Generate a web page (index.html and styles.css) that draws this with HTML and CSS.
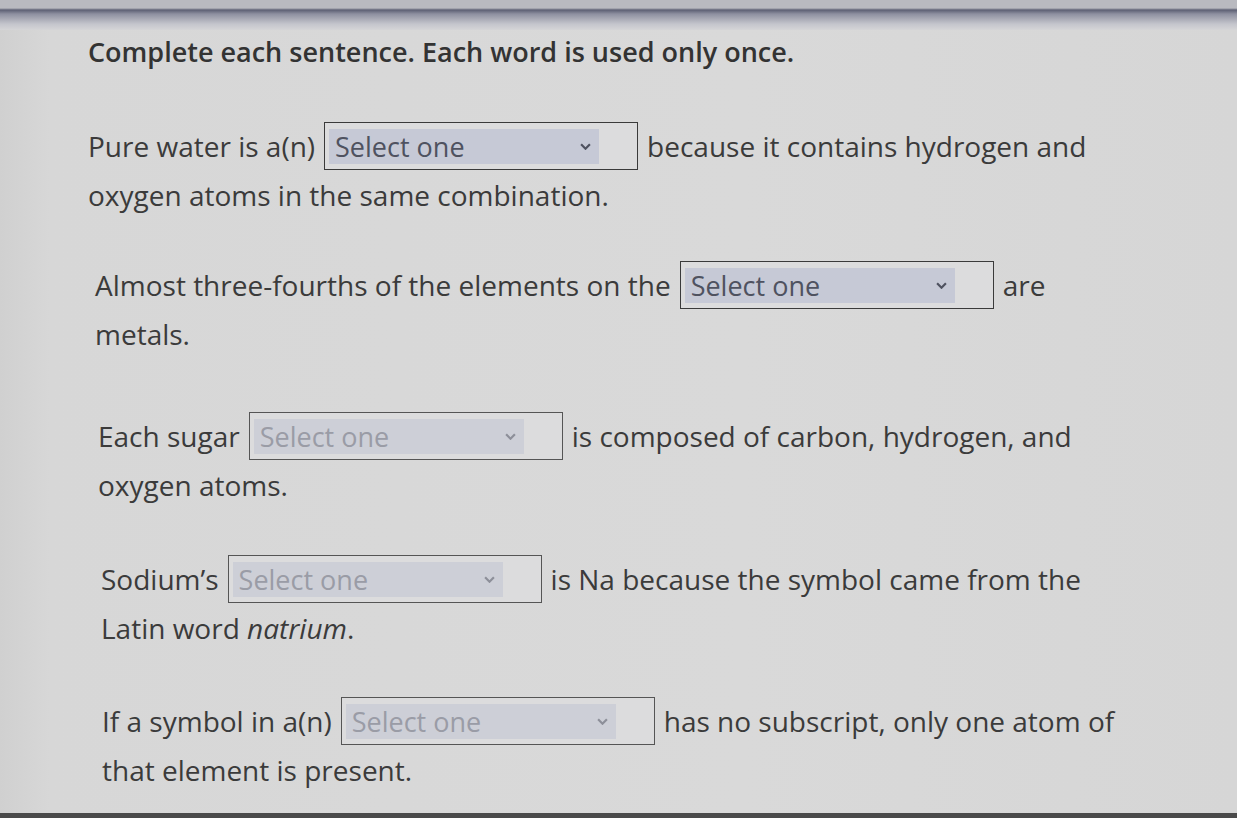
FILE: index.html
```html
<!DOCTYPE html>
<html lang="en">
<head>
    <meta charset="UTF-8">
    <title>Complete each sentence</title>
    <link rel="stylesheet" href="styles.css">
</head>
<body>

    <div class="screen-edge"></div>

    <div class="exercise">
        <h1 class="title">Complete each sentence. Each word is used only once.</h1>

        <div class="question">
            <div class="line">
                <span>Pure water is a(n)</span>
                <div class="dropdown">
                    <span class="dropdown-value">Select one
                        <svg class="chevron" viewBox="0 0 10 6"><path d="M1 1 L5 5 L9 1"/></svg>
                    </span>
                </div>
                <span>because it contains hydrogen and</span>
            </div>
            <div class="line-rest">oxygen atoms in the same combination.</div>
        </div>

        <div class="question">
            <div class="line">
                <span>Almost three-fourths of the elements on the</span>
                <div class="dropdown">
                    <span class="dropdown-value">Select one
                        <svg class="chevron" viewBox="0 0 10 6"><path d="M1 1 L5 5 L9 1"/></svg>
                    </span>
                </div>
                <span>are</span>
            </div>
            <div class="line-rest">metals.</div>
        </div>

        <div class="question">
            <div class="line">
                <span>Each sugar</span>
                <div class="dropdown faded">
                    <span class="dropdown-value">Select one
                        <svg class="chevron" viewBox="0 0 10 6"><path d="M1 1 L5 5 L9 1"/></svg>
                    </span>
                </div>
                <span>is composed of carbon, hydrogen, and</span>
            </div>
            <div class="line-rest">oxygen atoms.</div>
        </div>

        <div class="question">
            <div class="line">
                <span>Sodium’s</span>
                <div class="dropdown faded">
                    <span class="dropdown-value">Select one
                        <svg class="chevron" viewBox="0 0 10 6"><path d="M1 1 L5 5 L9 1"/></svg>
                    </span>
                </div>
                <span>is Na because the symbol came from the</span>
            </div>
            <div class="line-rest">Latin word <em>natrium</em>.</div>
        </div>

        <div class="question">
            <div class="line">
                <span>If a symbol in a(n)</span>
                <div class="dropdown faded">
                    <span class="dropdown-value">Select one
                        <svg class="chevron" viewBox="0 0 10 6"><path d="M1 1 L5 5 L9 1"/></svg>
                    </span>
                </div>
                <span>has no subscript, only one atom of</span>
            </div>
            <div class="line-rest">that element is present.</div>
        </div>
    </div>

    <div class="screen-bottom"></div>

</body>
</html>
```

FILE: styles.css
```css
body {
    margin: 0;
    height: 818px;
    overflow: hidden;
    background: linear-gradient(90deg, #d0d0d0 0%, #d7d7d7 4%, #d9d9d9 60%, #d6d6d6 100%);
    color: #3b3b3b;
    font-family: 'Open Sans', sans-serif;
    display: flex;
    flex-direction: column;
}

.screen-edge {
    height: 30px;
    flex: none;
    background: linear-gradient(180deg, #b9bac0 0px, #b9bac0 8px, #5d6074 10px, #8e90a0 14px, #c4c5cc 24px, #d5d5d7 30px);
}

.exercise {
    flex: 1;
    padding-left: 88px;
}

.title {
    margin: 4px 0 0 0;
    font-size: 27px;
    font-weight: 600;
    line-height: 36px;
    color: #333;
}

.question {
    font-size: 28px;
    margin-top: 45px;
}

    .question:nth-of-type(1) { margin-top: 52px; }
    .question:nth-of-type(2) { margin-top: 41px; margin-left: 7px; }
    .question:nth-of-type(3) { margin-top: 53px; margin-left: 10px; }
    .question:nth-of-type(4) { margin-top: 45px; margin-left: 13px; }
    .question:nth-of-type(5) { margin-top: 44px; margin-left: 14px; }

.line {
    display: flex;
    align-items: center;
    gap: 9px;
    height: 48px;
}

.line-rest {
    height: 50px;
    line-height: 50px;
}

.dropdown {
    width: 314px;
    height: 48px;
    border: 1.5px solid #3a3a3a;
    background-color: #dcdcdd;
    padding: 6px 38px 5px 4px;
    box-sizing: border-box;
    display: flex;
    font-size: 27px;
}

.dropdown-value {
    flex: 1;
    display: flex;
    align-items: center;
    justify-content: space-between;
    padding: 0 8px 0 6px;
    background-color: #c6c9d6;
    color: #4f5260;
}

.chevron {
    width: 11px;
    height: 7px;
    fill: none;
    stroke: #4f5260;
    stroke-width: 2;
}

.faded {
    border-color: #555;
}

    .faded .dropdown-value {
        background-color: #cdcfd7;
        color: #9a9ca6;
    }

    .faded .chevron {
        stroke: #8d8f99;
    }

.screen-bottom {
    height: 5px;
    flex: none;
    background-color: #4a4a4a;
}
```
